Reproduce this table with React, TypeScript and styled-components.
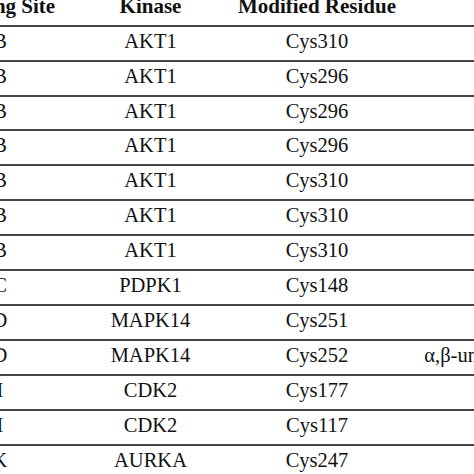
import React from "react";
import styled, { createGlobalStyle } from "styled-components";

const GlobalStyle = createGlobalStyle`
  html, body {
    margin: 0;
    padding: 0;
    background: #ffffff;
  }
  body {
    font-family: "Liberation Serif", "Times New Roman", serif;
    color: #111111;
  }
`;

const StyledViewport = styled.div`
  width: 474px;
  height: 474px;
  overflow: hidden;
`;

const StyledTable = styled.div`
  display: grid;
  grid-template-columns: 160px 141px 192px 210px;
  width: 703px;
  margin-left: -80px;
`;

const StyledHeaderCell = styled.div`
  box-sizing: border-box;
  height: 26.7px;
  display: flex;
  align-items: flex-end;
  justify-content: center;
  padding-bottom: 7.3px;
  border-bottom: 2px solid #444444;
  font-size: 21px;
  line-height: 21px;
  font-weight: bold;
  white-space: nowrap;
`;

const StyledCell = styled.div`
  box-sizing: border-box;
  height: 34.92px;
  display: flex;
  align-items: flex-start;
  justify-content: center;
  padding-bottom: 3.5px;
  border-bottom: 2px solid #444444;
  font-size: 20.5px;
  line-height: 29.42px;
  white-space: nowrap;
`;

type Row = {
  site: string;
  kinase: string;
  residue: string;
  note?: string;
};

const rows: Row[] = [
  { site: "B", kinase: "AKT1", residue: "Cys310" },
  { site: "B", kinase: "AKT1", residue: "Cys296" },
  { site: "B", kinase: "AKT1", residue: "Cys296" },
  { site: "B", kinase: "AKT1", residue: "Cys296" },
  { site: "B", kinase: "AKT1", residue: "Cys310" },
  { site: "B", kinase: "AKT1", residue: "Cys310" },
  { site: "B", kinase: "AKT1", residue: "Cys310" },
  { site: "C", kinase: "PDPK1", residue: "Cys148" },
  { site: "D", kinase: "MAPK14", residue: "Cys251" },
  {
    site: "D",
    kinase: "MAPK14",
    residue: "Cys252",
    note: "α,β-unsaturated ketone",
  },
  { site: "I", kinase: "CDK2", residue: "Cys177" },
  { site: "I", kinase: "CDK2", residue: "Cys117" },
  { site: "K", kinase: "AURKA", residue: "Cys247" },
];

const App = () => {
  return (
    <StyledViewport>
      <GlobalStyle />
      <StyledTable>
        <StyledHeaderCell>Binding Site</StyledHeaderCell>
        <StyledHeaderCell>Kinase</StyledHeaderCell>
        <StyledHeaderCell>Modified Residue</StyledHeaderCell>
        <StyledHeaderCell>Warhead</StyledHeaderCell>
        {rows.map((row, i) => (
          <React.Fragment key={i}>
            <StyledCell>{row.site}</StyledCell>
            <StyledCell>{row.kinase}</StyledCell>
            <StyledCell>{row.residue}</StyledCell>
            <StyledCell>{row.note ?? ""}</StyledCell>
          </React.Fragment>
        ))}
      </StyledTable>
    </StyledViewport>
  );
};

export default App;
